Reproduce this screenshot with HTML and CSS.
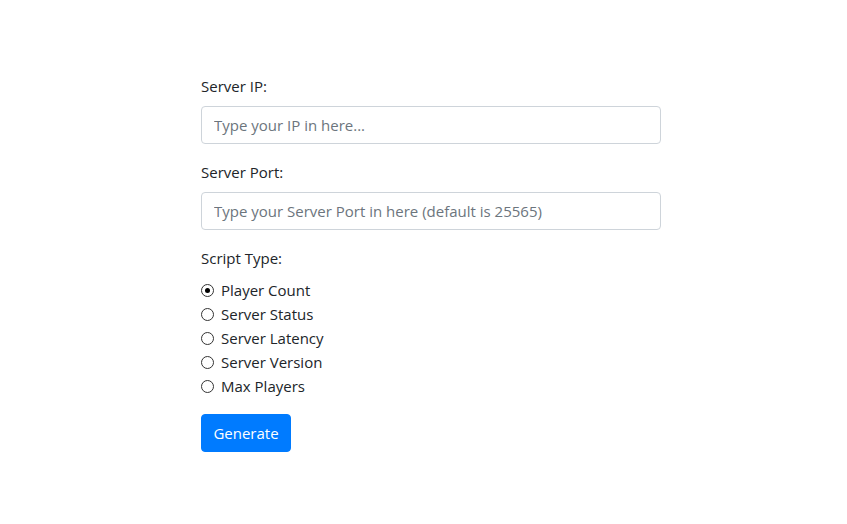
FILE: index.html
```
<!DOCTYPE html>
<html>
<head>
<meta charset="utf-8">
<link rel="stylesheet" href="styles.css">
</head>
<body>
<form class="form">
  <div class="group">
    <label class="label" for="ip">Server IP:</label>
    <input class="input" id="ip" type="text" placeholder="Type your IP in here...">
  </div>
  <div class="group">
    <label class="label" for="port">Server Port:</label>
    <input class="input" id="port" type="text" placeholder="Type your Server Port in here (default is 25565)">
  </div>
  <div class="group">
    <div class="label">Script Type:</div>
    <label class="radio"><input type="radio" name="t" checked><span>Player Count</span></label>
    <label class="radio"><input type="radio" name="t"><span>Server Status</span></label>
    <label class="radio"><input type="radio" name="t"><span>Server Latency</span></label>
    <label class="radio"><input type="radio" name="t"><span>Server Version</span></label>
    <label class="radio"><input type="radio" name="t"><span>Max Players</span></label>
  </div>
  <button type="button" class="btn">Generate</button>
</form>
</body>
</html>
```
FILE: styles.css
```
html, body {
  margin: 0;
  padding: 0;
  background: #fff;
}
body {
  font-family: "Open Sans", "Noto Sans", sans-serif;
  font-size: 15px;
  line-height: 24px;
  color: #212529;
}
.form {
  width: 460px;
  margin: 74px 0 0 201px;
}
.group {
  margin-bottom: 16px;
}
.label {
  display: block;
  margin-bottom: 8px;
}
.input {
  display: block;
  box-sizing: border-box;
  width: 100%;
  height: 38px;
  padding: 6px 12px;
  font: inherit;
  color: #495057;
  border: 1px solid #ced4da;
  border-radius: 4px;
  outline: none;
}
.input::placeholder {
  color: #6c757d;
  opacity: 1;
}
.radio {
  display: flex;
  align-items: center;
  height: 24px;
}
.radio input {
  appearance: none;
  -webkit-appearance: none;
  box-sizing: border-box;
  margin: 0 7px 0 0;
  width: 13px;
  height: 13px;
  border: 1px solid #333;
  border-radius: 50%;
  background: #fff;
  display: grid;
  place-items: center;
}
.radio input:checked::after {
  content: "";
  width: 5px;
  height: 5px;
  border-radius: 50%;
  background: #000;
}
.btn {
  display: block;
  height: 38px;
  width: 90px;
  padding: 0;
  font: inherit;
  color: #fff;
  background: #007bff;
  border: 1px solid #007bff;
  border-radius: 4px;
}
```
